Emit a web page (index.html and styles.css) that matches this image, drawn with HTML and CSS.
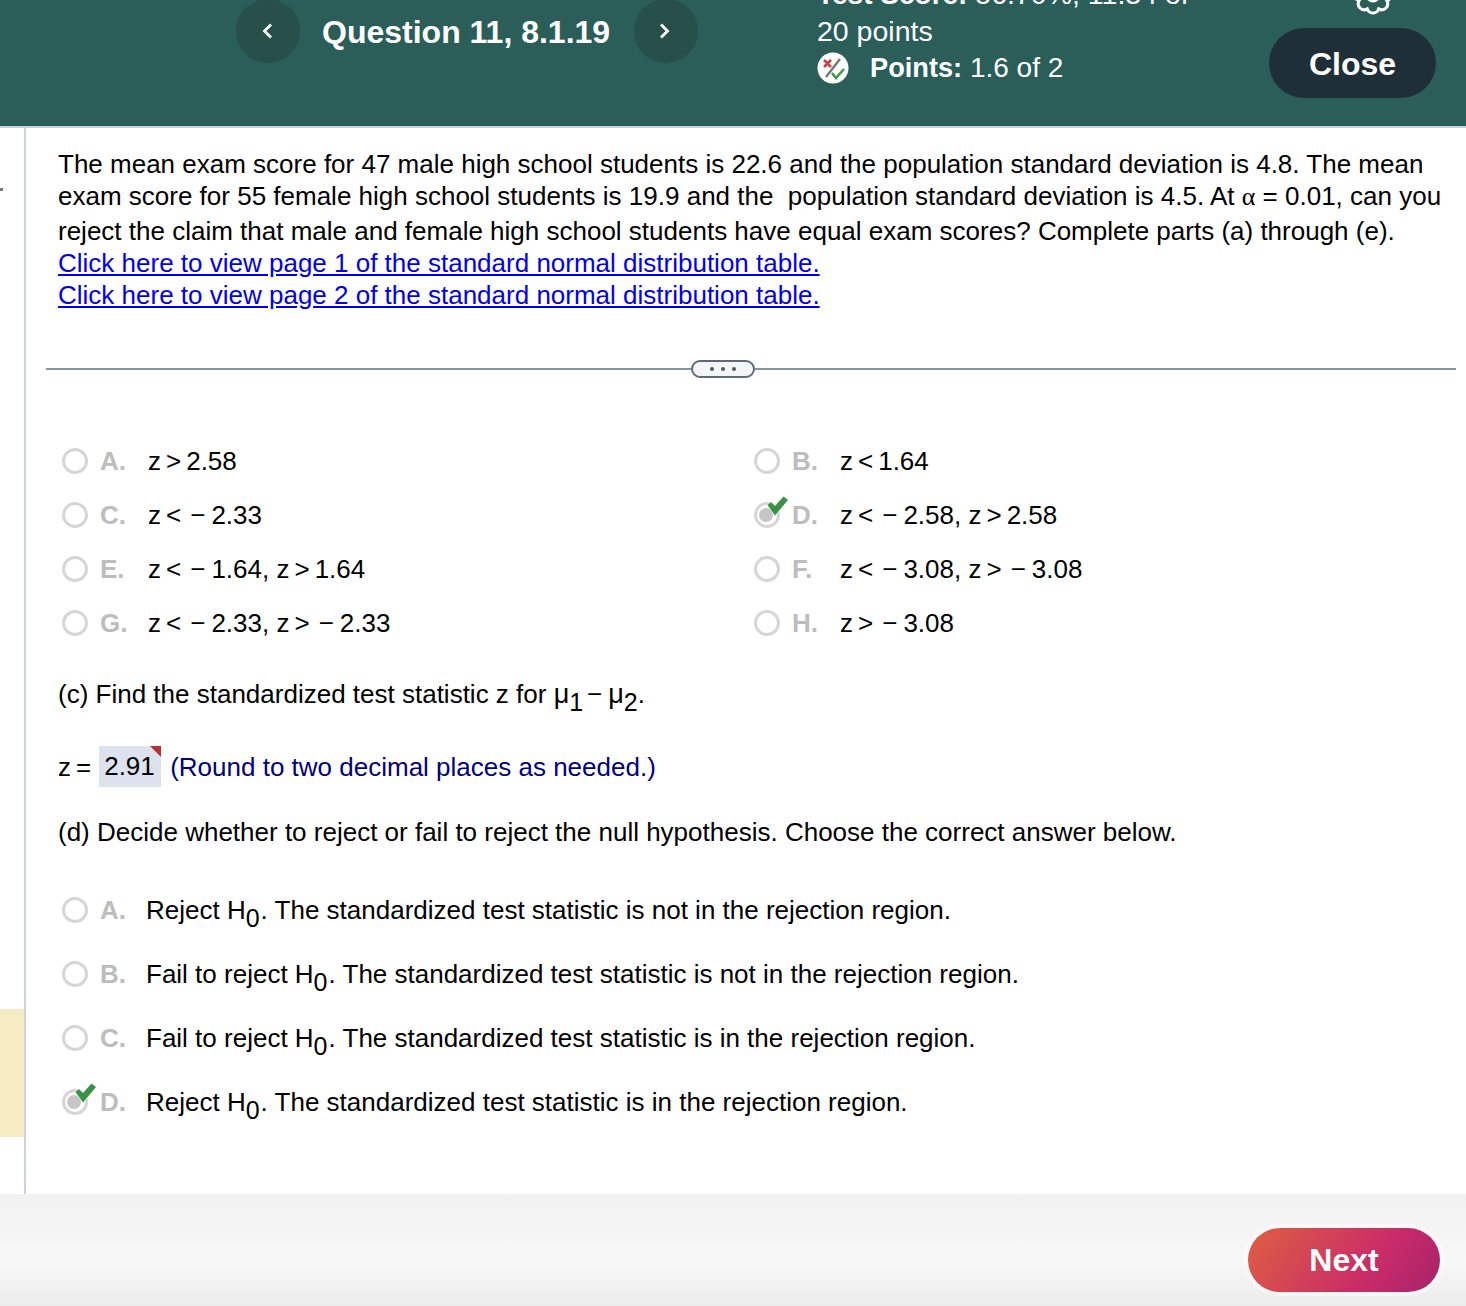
FILE: index.html
```html
<!DOCTYPE html>
<html lang="en">
<head>
    <meta charset="UTF-8">
    <title>Question 11, 8.1.19</title>
    <link rel="stylesheet" href="styles.css">
</head>
<body>
    <header class="top-bar">
        <div class="question-nav">
            <button class="nav-btn" aria-label="Previous">
                <svg width="12" height="16" viewBox="0 0 12 16"><path d="M9 1.500 2.500 8 9 14.500" fill="none" stroke="#fff" stroke-width="2.800"/></svg>
            </button>
            <h1 class="question-title">Question 11, 8.1.19</h1>
            <button class="nav-btn" aria-label="Next question">
                <svg width="12" height="16" viewBox="0 0 12 16"><path d="M1 1.500 7.500 8 1 14.500" fill="none" stroke="#fff" stroke-width="2.800"/></svg>
            </button>
        </div>
        <div class="score">
            <div><b>Test Score:</b> 56.70%, 11.34 of</div>
            <div>20 points</div>
            <div class="points-row">
                <svg class="points-icon" width="32" height="32" viewBox="0 0 32 32">
                    <circle cx="16" cy="16" r="15.500" fill="#fff"/>
                    <path d="M7 8l7 7M14 8l-7 7" stroke="#c0453f" stroke-width="2.600"/>
                    <path d="M9 25 23 7" stroke="#777" stroke-width="2.400"/>
                    <path d="M15 21l4 5 8-9" fill="none" stroke="#3d9a47" stroke-width="2.600"/>
                </svg>
                <span><b>Points:</b> 1.6 of 2</span>
            </div>
        </div>
        <div class="top-actions">
            <svg class="gear" width="40" height="40" viewBox="0 0 40 40">
                <path d="M33.900 14.300A6 6 0 0 1 33.900 25.700 6 6 0 0 1 25.700 33.900 6 6 0 0 1 14.300 33.900 6 6 0 0 1 6.100 25.700 6 6 0 0 1 6.100 14.300 6 6 0 0 1 14.300 6.100 6 6 0 0 1 25.700 6.100 6 6 0 0 1 33.900 14.300Z" fill="none" stroke="#fff" stroke-width="3"/>
                <circle cx="20" cy="20" r="6" fill="none" stroke="#fff" stroke-width="3"/>
            </svg>
            <button class="close-btn">Close</button>
        </div>
    </header>

    <div class="page">
        <aside class="gutter">
            <div class="gutter-dot"></div>
            <div class="gutter-mark"></div>
        </aside>
        <main class="content">
            <p class="problem">
                The mean exam score for 47 male high school students is 22.6 and the population standard deviation is 4.8. The mean<br>
                exam score for 55 female high school students is 19.9 and the &nbsp;population standard deviation is 4.5. At <span class="math">α</span> = 0.01, can you
                <span class="problem-line">reject the claim that male and female high school students have equal exam scores? Complete parts (a) through (e).</span>
                <a href="#">Click here to view page 1 of the standard normal distribution table.</a><br>
                <a href="#">Click here to view page 2 of the standard normal distribution table.</a>
            </p>

            <div class="divider">
                <span class="divider-line first"></span>
                <span class="divider-pill"><i></i><i></i><i></i></span>
                <span class="divider-line"></span>
            </div>

            <div class="choice-grid">
                <div class="choice"><span class="radio"></span><span class="letter">A.</span><span>z<span class="op">&gt;</span>2.58</span></div>
                <div class="choice"><span class="radio"></span><span class="letter">B.</span><span>z<span class="op">&lt;</span>1.64</span></div>
                <div class="choice"><span class="radio"></span><span class="letter">C.</span><span>z<span class="op">&lt;</span><span class="minus">−</span>2.33</span></div>
                <div class="choice">
                    <span class="radio selected">
                        <svg class="tick" width="24" height="22" viewBox="0 0 24 22"><path d="M1.500 10l7.500 10.500L22 5l-4.500-3.500L9 11 5 7z" fill="#3a9148" stroke="#fff" stroke-width="1" paint-order="stroke"/></svg>
                    </span>
                    <span class="letter">D.</span><span>z<span class="op">&lt;</span><span class="minus">−</span>2.58, z<span class="op">&gt;</span>2.58</span>
                </div>
                <div class="choice"><span class="radio"></span><span class="letter">E.</span><span>z<span class="op">&lt;</span><span class="minus">−</span>1.64, z<span class="op">&gt;</span>1.64</span></div>
                <div class="choice"><span class="radio"></span><span class="letter">F.</span><span>z<span class="op">&lt;</span><span class="minus">−</span>3.08, z<span class="op">&gt;</span><span class="minus">−</span>3.08</span></div>
                <div class="choice"><span class="radio"></span><span class="letter">G.</span><span>z<span class="op">&lt;</span><span class="minus">−</span>2.33, z<span class="op">&gt;</span><span class="minus">−</span>2.33</span></div>
                <div class="choice"><span class="radio"></span><span class="letter">H.</span><span>z<span class="op">&gt;</span><span class="minus">−</span>3.08</span></div>
            </div>

            <p class="part-c">(c) Find the standardized test statistic z for <span class="mu">μ</span><sub>1</sub><span class="op-tight">−</span><span class="mu">μ</span><sub>2</sub>.</p>

            <div class="answer-row">
                <span>z<span class="op">=</span></span>
                <span class="answer-box">2.91</span>
                <span class="hint">(Round to two decimal places as needed.)</span>
            </div>

            <p class="part-d">(d) Decide whether to reject or fail to reject the null hypothesis. Choose the correct answer below.</p>

            <div class="choice-list">
                <div class="choice tall"><span class="radio"></span><span class="letter">A.</span><span>Reject H<sub>0</sub>. The standardized test statistic is not in the rejection region.</span></div>
                <div class="choice tall"><span class="radio"></span><span class="letter">B.</span><span>Fail to reject H<sub>0</sub>. The standardized test statistic is not in the rejection region.</span></div>
                <div class="choice tall"><span class="radio"></span><span class="letter">C.</span><span>Fail to reject H<sub>0</sub>. The standardized test statistic is in the rejection region.</span></div>
                <div class="choice tall">
                    <span class="radio selected">
                        <svg class="tick" width="24" height="22" viewBox="0 0 24 22"><path d="M1.500 10l7.500 10.500L22 5l-4.500-3.500L9 11 5 7z" fill="#3a9148" stroke="#fff" stroke-width="1" paint-order="stroke"/></svg>
                    </span>
                    <span class="letter">D.</span><span>Reject H<sub>0</sub>. The standardized test statistic is in the rejection region.</span>
                </div>
            </div>
        </main>
    </div>

    <footer class="bottom-bar">
        <button class="next-btn">Next</button>
    </footer>
</body>
</html>
```

FILE: styles.css
```css
* {
    box-sizing: border-box;
    margin: 0;
    padding: 0;
}

body {
    display: flex;
    flex-direction: column;
    height: 1306px;
    overflow: hidden;
    background: #fff;
    color: #000;
    font-family: 'Liberation Sans', Arial, sans-serif;
    font-size: 26px;
    line-height: 32px;
}

button {
    border: none;
    font-family: inherit;
    color: #fff;
}

/* top bar */
.top-bar {
    display: flex;
    align-items: flex-start;
    flex: none;
    height: 128px;
    padding-left: 236px;
    overflow: hidden;
    background: #2b5e58;
    border-bottom: 2px solid #cdd0df;
    color: #fff;
}

.question-nav {
    display: flex;
    align-items: center;
    margin-top: -1px;
}

.nav-btn {
    display: flex;
    align-items: center;
    justify-content: center;
    width: 64px;
    height: 64px;
    border-radius: 50%;
    background: #265049;
}

.question-title {
    width: 334px;
    padding-top: 2px;
    padding-left: 22px;
    font-size: 32px;
    font-weight: bold;
    line-height: 62px;
}

.score {
    margin-top: -24px;
    margin-left: 119px;
    font-size: 28.500px;
    line-height: 36px;
}

.score b {
    font-size: 28px;
}

.points-row {
    display: flex;
    align-items: center;
    gap: 21px;
    margin-top: 1px;
    font-size: 28px;
}

.points-row b {
    font-size: 27.200px;
}

.points-icon {
    flex: none;
}

.top-actions {
    display: flex;
    flex-direction: column;
    align-items: center;
    margin-left: auto;
    margin-right: 30px;
}

.gear {
    margin-top: -25px;
    margin-left: 40px;
}

.close-btn {
    width: 167px;
    height: 70px;
    margin-top: 13px;
    padding-top: 2px;
    border-radius: 35px;
    background: #1f2f38;
    font-size: 32px;
    font-weight: bold;
}

/* page body */
.page {
    display: flex;
    flex: none;
    height: 1066px;
}

.gutter {
    flex: none;
    width: 26px;
    padding-top: 60px;
    border-right: 2px solid #cdd0df;
}

.gutter-dot {
    width: 3px;
    height: 3px;
    background: #777;
}

.gutter-mark {
    height: 128px;
    margin-top: 818px;
    background: #f7ecc1;
}

.content {
    flex: 1;
    padding: 20px 10px 0 32px;
}

.problem-line {
    display: block;
    margin-top: 2px;
}

.problem a {
    color: #0000ee;
}

.math {
    font-family: 'Liberation Serif', serif;
}

.mu {
    font-size: 27px;
}

.op {
    margin: 0 5px;
}

.op-tight {
    margin: 0 6px 0 4px;
}

.minus {
    margin: 0 6px 0 4px;
}

sub {
    font-size: 25px;
    line-height: 0;
    vertical-align: -8px;
    margin-right: 1px;
}

.part-c sub {
    margin-right: 0;
}

/* divider with the dots */
.divider {
    display: flex;
    align-items: center;
    height: 18px;
    margin-top: 49px;
    margin-left: -12px;
}

.divider-line {
    flex: 1;
    height: 2px;
    background: #8a92a3;
}

.divider-line.first {
    flex: none;
    width: 645px;
}

.divider-pill {
    display: flex;
    align-items: center;
    justify-content: center;
    gap: 7px;
    width: 64px;
    height: 18px;
    border: 2px solid #5d6b7b;
    border-radius: 9px;
    background: #f3f5f8;
}

.divider-pill i {
    width: 4px;
    height: 4px;
    border-radius: 50%;
    background: #4d5966;
}

/* multiple choice */
.choice-grid {
    display: grid;
    grid-template-columns: 692px 1fr;
    margin-top: 56px;
}

.choice {
    display: flex;
    align-items: center;
    height: 54px;
    padding-left: 4px;
}

.choice.tall {
    height: 64px;
}

.radio {
    position: relative;
    flex: none;
    width: 26px;
    height: 26px;
    border: 3px solid #d6d6d6;
    border-radius: 50%;
    background: #fff;
}

.radio.selected::before {
    content: "";
    position: absolute;
    left: 2px;
    top: 3px;
    width: 14px;
    height: 14px;
    border-radius: 50%;
    background: #c6c6c6;
}

.tick {
    position: absolute;
    left: 9px;
    top: -10px;
}

.letter {
    flex: none;
    width: 48px;
    margin-left: 12px;
    color: #bdbdbd;
    font-weight: bold;
}

.tall .letter {
    width: 46px;
}

.part-c {
    margin-top: 28px;
}

.answer-row {
    display: flex;
    align-items: center;
    height: 41px;
    margin-top: 36px;
}

.answer-box {
    position: relative;
    width: 62px;
    height: 41px;
    margin-left: 3px;
    padding-left: 5px;
    background: #dce3ef;
    line-height: 41px;
}

.answer-box::after {
    content: "";
    position: absolute;
    top: 0;
    right: 0;
    border-top: 11px solid #b8312f;
    border-left: 11px solid transparent;
}

.hint {
    margin-left: 9px;
    color: #000080;
}

.part-d {
    margin-top: 29px;
}

.choice-list {
    margin-top: 30px;
}

/* bottom bar */
.bottom-bar {
    display: flex;
    flex: 1;
    justify-content: flex-end;
    padding: 34px 26px 0 0;
    background: linear-gradient(#f1f1f1, #f8f8f8 60%, #ececec);
}

.next-btn {
    width: 192px;
    height: 64px;
    border-radius: 32px;
    background: linear-gradient(125deg, #de5f43, #c92b69 65%, #a5236a);
    box-shadow: 0 0 0 4px rgba(255, 255, 255, 0.4);
    font-size: 32px;
    font-weight: bold;
}
```
